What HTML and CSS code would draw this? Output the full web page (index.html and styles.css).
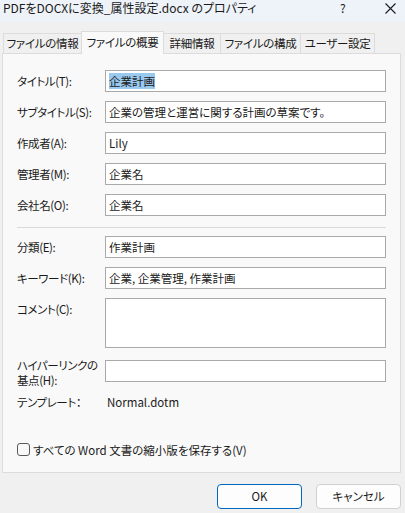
FILE: index.html
```html
<!DOCTYPE html>
<html lang="ja">
<head>
<meta charset="utf-8">
<title>プロパティ</title>
<link rel="stylesheet" href="styles.css">
</head>
<body>
<div class="window">
  <div class="titlebar">
    <span class="title">PDFをDOCXに変換_属性設定.docx のプロパティ</span>
    <span class="help">?</span>
    <span class="close"><svg width="11" height="11" viewBox="0 0 11 11"><path d="M0.5 0.5L10.5 10.5M10.5 0.5L0.5 10.5" stroke="#1a1a1a" stroke-width="1.1" fill="none"/></svg></span>
  </div>
  <div class="tabs">
    <div class="tab t1">ファイルの情報</div>
    <div class="tab t2 active">ファイルの概要</div>
    <div class="tab t3">詳細情報</div>
    <div class="tab t4">ファイルの構成</div>
    <div class="tab t5">ユーザー設定</div>
  </div>
  <div class="panel">
    <div class="row"><div class="label">タイトル(T):</div><div class="field"><span class="sel">企業計画</span></div></div>
    <div class="row"><div class="label">サブタイトル(S):</div><div class="field">企業の管理と運営に関する計画の草案です。</div></div>
    <div class="row"><div class="label">作成者(A):</div><div class="field">Lily</div></div>
    <div class="row"><div class="label">管理者(M):</div><div class="field">企業名</div></div>
    <div class="row last"><div class="label">会社名(O):</div><div class="field">企業名</div></div>
    <div class="sep"></div>
    <div class="row"><div class="label">分類(E):</div><div class="field">作業計画</div></div>
    <div class="row"><div class="label">キーワード(K):</div><div class="field">企業, 企業管理, 作業計画</div></div>
    <div class="row top"><div class="label">コメント(C):</div><div class="field area"></div></div>
    <div class="row two"><div class="label">ハイパーリンクの<br>基点(H):</div><div class="field"></div></div>
    <div class="row plain"><div class="label">テンプレート：</div><div class="value">Normal.dotm</div></div>
    <div class="check"><span class="box"></span><span>すべての Word 文書の縮小版を保存する(V)</span></div>
  </div>
  <div class="buttons">
    <div class="btn ok">OK</div>
    <div class="btn">キャンセル</div>
  </div>
</div>
</body>
</html>
```
FILE: styles.css
```css
* { box-sizing: border-box; }
html, body { margin: 0; padding: 0; }
body {
  width: 405px;
  height: 513px;
  overflow: hidden;
  background: #f0f0f0;
  font-family: "Noto Sans CJK JP", "Noto Sans", sans-serif;
  font-size: 11.5px;
  color: #1a1a1a;
  font-feature-settings: "palt";
}
.window { width: 405px; height: 513px; }
.titlebar {
  height: 22px;
  background: #eef3f9;
  display: flex;
  align-items: flex-start;
  position: relative;
}
.title { margin-left: 3px; line-height: 16px; font-size: 12px; color: #1a1a1a; }
.help { position: absolute; left: 340px; top: 0; line-height: 16px; font-size: 12px; }
.close { position: absolute; left: 385px; top: 3px; line-height: 0; }
.tabs {
  display: flex;
  align-items: flex-end;
  margin-top: 9px;
  padding-left: 3px;
  height: 22px;
  position: relative;
  z-index: 2;
}
.tab {
  height: 20px;
  line-height: 19px;
  text-align: center;
  background: #f0f0f0;
  border: 1px solid #dcdcdc;
  border-bottom: none;
  margin-right: -1px;
  white-space: nowrap;
  letter-spacing: -0.3px;
}
.t1 { width: 79px; }
.t2 { width: 83px; }
.t3 { width: 58px; }
.t4 { width: 81px; }
.t5 { width: 75px; }
.tab.active {
  height: 23px;
  line-height: 21px;
  background: #f9f9f9;
  margin-bottom: -1px;
  position: relative;
  z-index: 3;
}
.panel {
  margin-left: 2px;
  width: 399px;
  height: 420px;
  background: #f9f9f9;
  border: 1px solid #dcdcdc;
  padding: 16px 13px 0 14px;
}
.row {
  display: flex;
  align-items: center;
  height: 22px;
  margin-bottom: 9px;
}
.row.last { margin-bottom: 0; }
.label { width: 88px; flex: none; white-space: nowrap; letter-spacing: -0.4px; }
.field {
  width: 281px;
  height: 22px;
  background: #fff;
  border: 1px solid #a9a9a9;
  padding: 0 3px;
  line-height: 20px;
  white-space: nowrap;
  overflow: hidden;
}
.sel { background: #99c9ef; }
.sep {
  height: 1px;
  background: #dadada;
  margin: 11px 0 8px 0;
  width: 369px;
}
.row.top { align-items: flex-start; height: 50px; margin-bottom: 10px; }
.row.top .label { line-height: 22px; }
.field.area { height: 50px; }
.row.two { align-items: flex-start; height: 30px; margin-bottom: 3px; }
.row.two .label { line-height: 15px; }
.row.two .field { margin-top: 2px; }
.value { padding-left: 2px; }
.check {
  display: flex;
  align-items: center;
  margin-top: 28px;
  height: 17px;
}
.box {
  width: 13px;
  height: 13px;
  border: 1px solid #5a5a5a;
  border-radius: 3px;
  background: #f9f9f9;
  margin-right: 3px;
  flex: none;
}
.buttons {
  display: flex;
  justify-content: flex-end;
  gap: 14px;
  margin-top: 11px;
  padding-right: 4px;
}
.btn {
  width: 85px;
  height: 25px;
  line-height: 23px;
  text-align: center;
  background: #fdfdfd;
  border: 1px solid #d0d0d0;
  border-radius: 4px;
}
.btn.ok { border-color: #0067c0; }
```
